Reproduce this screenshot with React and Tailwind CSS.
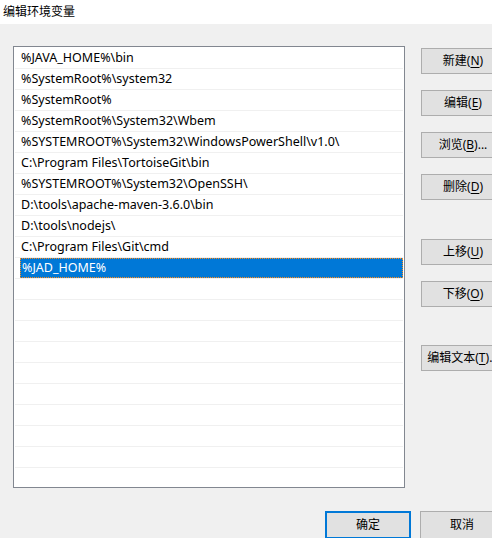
import React from "react";

const paths = [
  "%JAVA_HOME%\\bin",
  "%SystemRoot%\\system32",
  "%SystemRoot%",
  "%SystemRoot%\\System32\\Wbem",
  "%SYSTEMROOT%\\System32\\WindowsPowerShell\\v1.0\\",
  "C:\\Program Files\\TortoiseGit\\bin",
  "%SYSTEMROOT%\\System32\\OpenSSH\\",
  "D:\\tools\\apache-maven-3.6.0\\bin",
  "D:\\tools\\nodejs\\",
  "C:\\Program Files\\Git\\cmd",
  "%JAD_HOME%",
];

const font = { fontFamily: '"Noto Sans", "Noto Sans CJK SC", sans-serif' };

function Btn({ label, keyChar, suffix = "", className = "" }) {
  return (
    <button
      className={`w-[84px] h-[26px] shrink-0 bg-[#e1e1e1] border border-[#adadad] text-[12px] text-black leading-none whitespace-nowrap flex items-center justify-center overflow-visible ${className}`}
    >
      <span>
        {label}(<span className="underline underline-offset-2">{keyChar}</span>){suffix}
      </span>
    </button>
  );
}

export default function App() {
  const rows = [...paths];
  while (rows.length < 21) rows.push("");

  return (
    <div className="w-[492px] h-[538px] overflow-hidden bg-[#f0f0f0] flex flex-col" style={font}>
      <div className="h-[24px] shrink-0 bg-white flex items-center pl-[3px] text-[12px] text-black">
        编辑环境变量
      </div>

      <div className="flex items-start">
        <div className="ml-[13px] mt-[22px] w-[392px] h-[442px] shrink-0 bg-white border border-[#828790] p-[1px] overflow-hidden">
          {rows.map((p, i) =>
            i === 10 ? (
              <div key={i} className="h-[21px] border-b border-[#f0f0f0] pl-[5px]">
                <div className="h-full bg-[#0078d7] border border-dotted border-[#ff8c1a] text-white text-[12.5px] flex items-center pl-[1px] whitespace-nowrap">
                  {p}
                </div>
              </div>
            ) : (
              <div
                key={i}
                className="h-[21px] border-b border-[#f0f0f0] pl-[6px] text-[12.5px] text-black flex items-center whitespace-nowrap"
              >
                {p}
              </div>
            )
          )}
        </div>

        <div className="ml-[16px] mt-[24px] flex flex-col shrink-0">
          <Btn label="新建" keyChar="N" />
          <Btn label="编辑" keyChar="E" className="mt-[16px]" />
          <Btn label="浏览" keyChar="B" suffix="..." className="mt-[16px]" />
          <Btn label="删除" keyChar="D" className="mt-[16px]" />
          <Btn label="上移" keyChar="U" className="mt-[39px]" />
          <Btn label="下移" keyChar="O" className="mt-[16px]" />
          <Btn label="编辑文本" keyChar="T" suffix="..." className="mt-[38px]" />
        </div>
      </div>

      <div className="flex mt-[23px] ml-[325px] gap-[9px]">
        <button className="w-[86px] h-[28px] shrink-0 bg-[#e1e1e1] border-2 border-[#0078d7] text-[12px] text-black">
          确定
        </button>
        <button className="w-[84px] h-[28px] shrink-0 bg-[#e1e1e1] border border-[#adadad] text-[12px] text-black">
          取消
        </button>
      </div>
    </div>
  );
}
